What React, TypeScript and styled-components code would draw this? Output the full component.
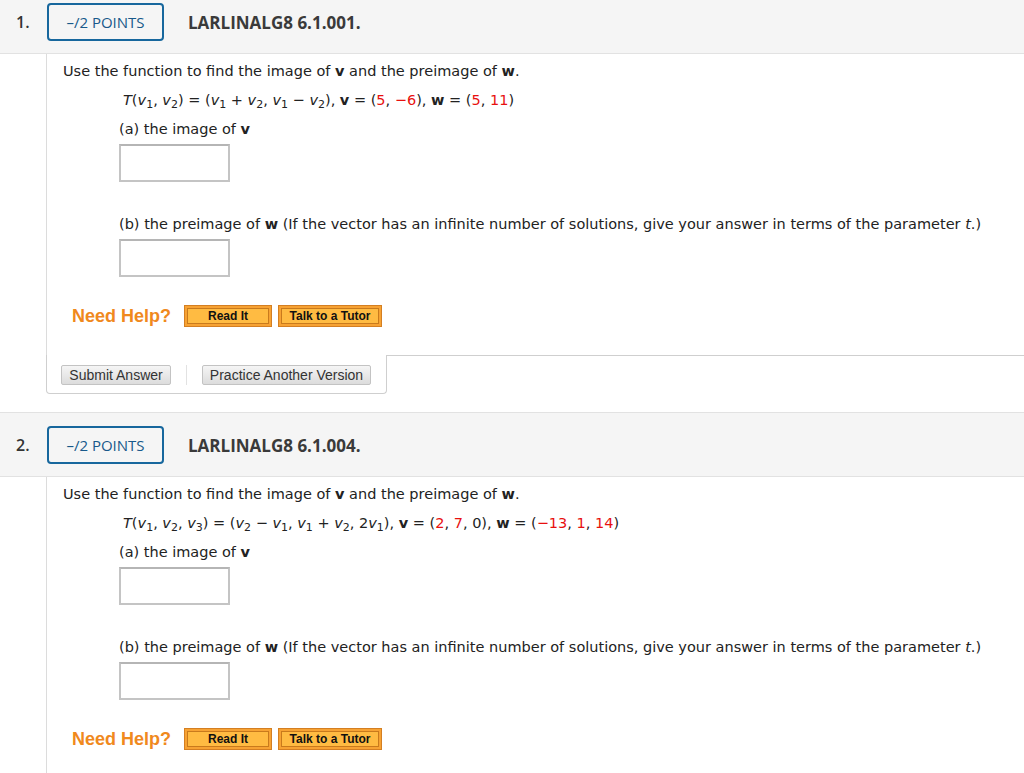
import styled, { createGlobalStyle } from "styled-components";

const GlobalStyle = createGlobalStyle`
  html, body {
    margin: 0;
    padding: 0;
    background: #fff;
    overflow: hidden;
  }
`;

interface Term {
  text: string
  red?: boolean
}

const Page = styled.div`
  width: 1024px;
  margin-top: -11px;
  font-family: "DejaVu Sans", Verdana, sans-serif;
  color: #222;
`;

const QuestionWrap = styled.section<{ $gap?: boolean }>`
  margin-bottom: ${(p) => (p.$gap ? "18px" : "0")};
`;

const Header = styled.div`
  display: flex;
  align-items: center;
  background: #f5f5f5;
  border-top: 1px solid #e2e2e2;
  border-bottom: 1px solid #e2e2e2;
  padding-left: 16px;
  padding-top: 1px;
  box-sizing: border-box;
  height: 65px;
  font-family: "Open Sans", sans-serif;
  color: #333;
`;

const QNumber = styled.span`
  width: 31px;
  font-size: 16px;
  font-weight: 600;
`;

const PointsBox = styled.div`
  width: 117px;
  height: 38px;
  box-sizing: border-box;
  border: 2px solid #17679d;
  border-radius: 4px;
  display: flex;
  align-items: center;
  justify-content: center;
  font-size: 15px;
  color: #18598a;
`;

const Title = styled.h3`
  margin: 0 0 0 24px;
  font-size: 17px;
  font-weight: 700;
  color: #3a3a3a;
`;

const Body = styled.div`
  margin-left: 46px;
  border-left: 1px solid #dcdcdc;
  padding: 3px 0 28px 16px;
  font-size: 14.5px;
  line-height: 29px;
`;

const Line = styled.div<{ $indent?: number }>`
  margin-left: ${(p) => p.$indent ?? 0}px;
  white-space: nowrap;
`;

const Sub = styled.sub`
  font-size: 11px;
  vertical-align: -3px;
  line-height: 0;
`;

const Red = styled.span`
  color: #e8100f;
`;

const AnswerBox = styled.input`
  display: block;
  margin: 0 0 28px 56px;
  width: 111px;
  height: 38px;
  box-sizing: border-box;
  border: 2px solid #c4c4c4;
  border-top-color: #b5b5b5;
  background: #fff;
  outline: none;
`;

const HelpRow = styled.div`
  display: flex;
  align-items: center;
  margin: 28px 0 0 9px;
  height: 22px;
`;

const HelpLabel = styled.span`
  font-family: "Liberation Sans", Arial, sans-serif;
  font-weight: 700;
  font-size: 18px;
  color: #f0891d;
  margin-right: 13px;
`;

const HelpButton = styled.button<{ $w: number }>`
  width: ${(p) => p.$w}px;
  height: 22px;
  margin-right: 6px;
  padding: 2px;
  box-sizing: border-box;
  border: 1px solid #d47f22;
  background: #f7a233;
  display: flex;
  cursor: pointer;
`;

const HelpInner = styled.span`
  flex: 1;
  border: 1px solid #c97a1c;
  background: #ffbb42;
  font-family: "Liberation Sans", Arial, sans-serif;
  font-weight: 700;
  font-size: 12px;
  line-height: 14px;
  color: #111;
  text-align: center;
`;

const Footer = styled.div`
  display: flex;
  margin-left: 46px;
`;

const FooterBox = styled.div`
  display: flex;
  align-items: center;
  gap: 15px;
  padding: 10px 15px 8px 14px;
  border: 1px solid #cfcfcf;
  border-top: none;
  border-radius: 0 0 4px 4px;
`;

const FooterFill = styled.div`
  flex: 1;
  border-top: 1px solid #cfcfcf;
`;

const GrayButton = styled.button<{ $w: number }>`
  width: ${(p) => p.$w}px;
  height: 20px;
  padding: 0;
  border: 1px solid #c3c3c3;
  border-radius: 2px;
  background: linear-gradient(#f5f5f5, #dcdcdc);
  font-family: "Liberation Sans", Arial, sans-serif;
  font-size: 14px;
  line-height: 18px;
  color: #333;
  cursor: pointer;
`;

const Divider = styled.span`
  width: 1px;
  height: 20px;
  background: #e2e2e2;
`;

const Terms = ({ items }: { items: Term[] }) => (
  <>
    (
    {items.map((t, i) => (
      <span key={i}>
        {t.red ? <Red>{t.text}</Red> : t.text}
        {i < items.length - 1 ? ", " : ""}
      </span>
    ))}
    )
  </>
);

const V = ({ n }: { n: number }) => (
  <>
    <i>v</i>
    <Sub>{n}</Sub>
  </>
);

interface QProps {
  num: string
  code: string
  equation: React.ReactNode
  last?: boolean
}

const Question = ({ num, code, equation, last }: QProps) => (
  <QuestionWrap $gap={!last}>
    <Header>
      <QNumber>{num}</QNumber>
      <PointsBox>–/2 POINTS</PointsBox>
      <Title>{code}</Title>
    </Header>
    <Body>
      <Line>
        Use the function to find the image of <b>v</b> and the preimage of <b>w</b>.
      </Line>
      <Line $indent={60}>{equation}</Line>
      <Line $indent={56}>
        (a) the image of <b>v</b>
      </Line>
      <AnswerBox />
      <Line $indent={56}>
        (b) the preimage of <b>w</b> (If the vector has an infinite number of solutions, give your
        answer in terms of the parameter <i>t</i>.)
      </Line>
      <AnswerBox />
      <HelpRow>
        <HelpLabel>Need Help?</HelpLabel>
        <HelpButton $w={88}>
          <HelpInner>Read It</HelpInner>
        </HelpButton>
        <HelpButton $w={104}>
          <HelpInner>Talk to a Tutor</HelpInner>
        </HelpButton>
      </HelpRow>
    </Body>
    {!last && (
      <Footer>
        <FooterBox>
          <GrayButton $w={110}>Submit Answer</GrayButton>
          <Divider />
          <GrayButton $w={169}>Practice Another Version</GrayButton>
        </FooterBox>
        <FooterFill />
      </Footer>
    )}
  </QuestionWrap>
);

const App = () => {
  const eq1 = (
    <>
      <i>T</i>(<V n={1} />, <V n={2} />) = (<V n={1} /> + <V n={2} />, <V n={1} /> − <V n={2} />),{" "}
      <b>v</b> = <Terms items={[{ text: "5", red: true }, { text: "−6", red: true }]} />,{" "}
      <b>w</b> = <Terms items={[{ text: "5", red: true }, { text: "11", red: true }]} />
    </>
  );
  const eq2 = (
    <>
      <i>T</i>(<V n={1} />, <V n={2} />, <V n={3} />) = (<V n={2} /> − <V n={1} />, <V n={1} /> +{" "}
      <V n={2} />, 2<V n={1} />), <b>v</b> ={" "}
      <Terms items={[{ text: "2", red: true }, { text: "7", red: true }, { text: "0" }]} />,{" "}
      <b>w</b> ={" "}
      <Terms items={[{ text: "−13", red: true }, { text: "1", red: true }, { text: "14", red: true }]} />
    </>
  );

  return (
    <>
      <GlobalStyle />
      <Page>
        <Question num="1." code="LARLINALG8 6.1.001." equation={eq1} />
        <Question num="2." code="LARLINALG8 6.1.004." equation={eq2} last />
      </Page>
    </>
  );
};

export default App;
